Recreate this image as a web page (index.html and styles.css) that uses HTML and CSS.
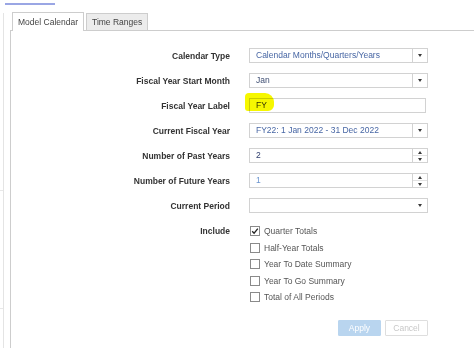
FILE: index.html
```html
<!DOCTYPE html>
<html lang="en">

<head>
    <meta charset="UTF-8">
    <meta name="viewport" content="width=device-width, initial-scale=1.0">
    <title>Model Calendar</title>
    <link rel="stylesheet" href="styles.css">
</head>

<body>
    <div class="top-strip">
        <span class="top-accent"></span>
    </div>

    <div class="body-area">
        <div class="side-rail">
            <span class="rail-mark first"></span>
            <span class="rail-mark second"></span>
        </div>

        <div class="dialog">
            <div class="tabs">
                <div class="tab active">Model Calendar</div>
                <div class="tab">Time Ranges</div>
            </div>

            <div class="panel">
                <div class="form">
                    <div class="field-label">Calendar Type</div>
                    <div class="select">
                        <span class="value blue">Calendar Months/Quarters/Years</span>
                        <span class="arrow"><i class="tri-down"></i></span>
                    </div>

                    <div class="field-label">Fiscal Year Start Month</div>
                    <div class="select">
                        <span class="value slate">Jan</span>
                        <span class="arrow"><i class="tri-down"></i></span>
                    </div>

                    <div class="field-label">Fiscal Year Label</div>
                    <div class="text-input">
                        <span class="value dark">FY</span>
                        <span class="marker"></span>
                    </div>

                    <div class="field-label">Current Fiscal Year</div>
                    <div class="select">
                        <span class="value blue">FY22: 1 Jan 2022 - 31 Dec 2022</span>
                        <span class="arrow"><i class="tri-down"></i></span>
                    </div>

                    <div class="field-label">Number of Past Years</div>
                    <div class="select">
                        <span class="value navy">2</span>
                        <span class="spinner">
                            <span class="spin-half"><i class="tri-up"></i></span>
                            <span class="spin-half"><i class="tri-down"></i></span>
                        </span>
                    </div>

                    <div class="field-label">Number of Future Years</div>
                    <div class="select">
                        <span class="value light-blue">1</span>
                        <span class="spinner">
                            <span class="spin-half"><i class="tri-up"></i></span>
                            <span class="spin-half"><i class="tri-down"></i></span>
                        </span>
                    </div>

                    <div class="field-label">Current Period</div>
                    <div class="select">
                        <span class="value"></span>
                        <span class="arrow plain"><i class="tri-down"></i></span>
                    </div>

                    <div class="field-label include-label">Include</div>
                    <div class="check-list">
                        <div class="check-row">
                            <span class="box">
                                <svg width="8" height="8" viewBox="0 0 8 8">
                                    <polyline points="1.2,4.2 3.1,6.2 6.8,1.6" fill="none" stroke="#222" stroke-width="1.3" />
                                </svg>
                            </span>
                            <span>Quarter Totals</span>
                        </div>
                        <div class="check-row"><span class="box"></span><span>Half-Year Totals</span></div>
                        <div class="check-row"><span class="box"></span><span>Year To Date Summary</span></div>
                        <div class="check-row"><span class="box"></span><span>Year To Go Summary</span></div>
                        <div class="check-row"><span class="box"></span><span>Total of All Periods</span></div>
                    </div>

                    <div class="actions">
                        <button class="btn btn-apply">Apply</button>
                        <button class="btn btn-cancel">Cancel</button>
                    </div>
                </div>
            </div>
        </div>
    </div>
</body>

</html>
```

FILE: styles.css
```css
* {
    padding: 0;
    margin: 0;
    box-sizing: border-box;
}

body {
    font-family: "Liberation Sans", Arial, sans-serif;
    font-size: 8.5px;
    color: #333;
    background-color: #fff;
    width: 474px;
    height: 348px;
    overflow: hidden;
}

/* top strip */

.top-strip {
    height: 12px;
    padding: 3px 0 0 5px;
}

.top-accent {
    display: block;
    width: 50px;
    height: 2px;
    background-color: #9aa6e4;
}

.body-area {
    display: flex;
    height: 336px;
}

.side-rail {
    position: relative;
    width: 4px;
    margin-top: 1px;
    border-right: 1px solid #e4e4e4;
}

.rail-mark {
    position: absolute;
    left: 0;
    width: 3px;
    height: 1px;
    background-color: #e8e8e8;
}

.rail-mark.first {
    top: 177px;
}

.rail-mark.second {
    top: 295px;
}

.dialog {
    flex: 1;
    margin-left: 6px;
    display: flex;
    flex-direction: column;
}

/* tabs */

.tabs {
    display: flex;
    align-items: flex-end;
    gap: 2px;
    padding-left: 2px;
    height: 18px;
    position: relative;
    z-index: 1;
}

.tab {
    height: 17px;
    line-height: 16px;
    padding: 0 5px;
    border: 1px solid #cdcdcd;
    border-bottom: 0;
    background-color: #ececec;
    color: #444;
    white-space: nowrap;
}

.tab.active {
    height: 19px;
    margin-bottom: -1px;
    line-height: 18px;
    background-color: #fff;
}

.panel {
    flex: 1;
    border-top: 1px solid #cdcdcd;
    border-left: 1px solid #cdcdcd;
    padding-top: 17px;
}

/* form */

.form {
    display: grid;
    grid-template-columns: 219px 179px;
    column-gap: 19px;
    row-gap: 10px;
}

.field-label {
    font-weight: bold;
    text-align: right;
    align-self: center;
    color: #333;
    white-space: nowrap;
}

.include-label {
    align-self: start;
    line-height: 16px;
}

.select,
.text-input {
    position: relative;
    display: flex;
    height: 15px;
    border: 1px solid #d2d2d2;
    background-color: #fff;
}

.text-input {
    width: 177px;
}

.value {
    flex: 1;
    padding-left: 6px;
    line-height: 13px;
    white-space: nowrap;
    overflow: hidden;
}

.value.blue {
    color: #4766a4;
}

.value.slate {
    color: #3e4e72;
}

.value.dark {
    color: #333;
}

.value.navy {
    color: #2c3c6c;
}

.value.light-blue {
    color: #6a94cf;
}

.arrow,
.spinner {
    width: 15px;
    border-left: 1px solid #d2d2d2;
    display: flex;
    flex-direction: column;
    align-items: center;
    justify-content: center;
}

.arrow.plain {
    border-left-color: transparent;
}

.spin-half {
    flex: 1;
    width: 100%;
    display: flex;
    align-items: center;
    justify-content: center;
}

.spin-half + .spin-half {
    border-top: 1px solid #e2e2e2;
}

.tri-down,
.tri-up {
    display: block;
    width: 0;
    height: 0;
    border-left: 2.5px solid transparent;
    border-right: 2.5px solid transparent;
}

.tri-down {
    border-top: 3px solid #3a3a3a;
}

.tri-up {
    border-bottom: 3px solid #3a3a3a;
}

.marker {
    position: absolute;
    left: -5px;
    top: -6px;
    width: 29px;
    height: 18px;
    border-radius: 4px 9px 6px 3px;
    background-color: #f6f700;
    mix-blend-mode: multiply;
}

/* include checkboxes */

.check-list {
    display: flex;
    flex-direction: column;
    padding-left: 1px;
}

.check-row {
    display: flex;
    align-items: center;
    gap: 4px;
    height: 16.5px;
    color: #555;
}

.box {
    width: 10px;
    height: 10px;
    border: 1px solid #8a8a8a;
    background-color: #fff;
    display: flex;
    align-items: center;
    justify-content: center;
}

/* buttons */

.actions {
    grid-column: 2;
    display: flex;
    justify-content: flex-end;
    gap: 4px;
    margin-top: 4.5px;
}

.btn {
    width: 43px;
    height: 16px;
    font-family: "Liberation Sans", Arial, sans-serif;
    font-size: 8.5px;
    border-radius: 1px;
}

.btn-apply {
    background-color: #b9d5ef;
    border: 1px solid #b9d5ef;
    color: #fff;
}

.btn-cancel {
    background-color: #fff;
    border: 1px solid #dedede;
    color: #c8c8c8;
}
```
